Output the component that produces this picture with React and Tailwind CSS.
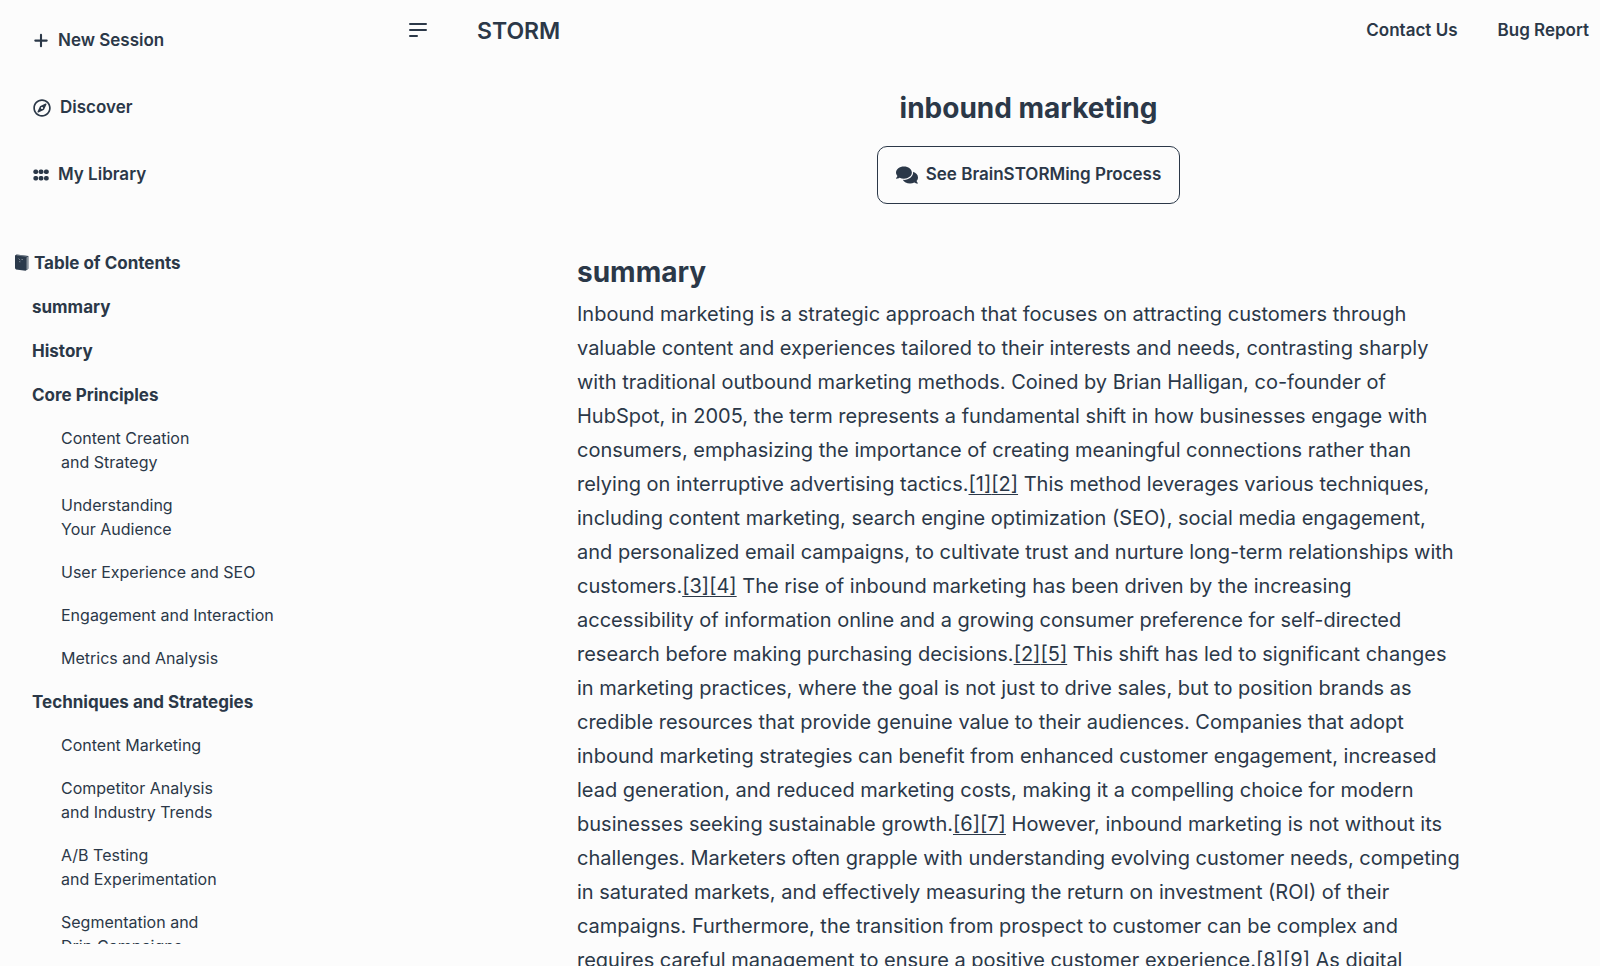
import React from "react";
import { FaComments, FaRegCompass } from "react-icons/fa";

const toc = [
  { title: "summary" },
  { title: "History" },
  {
    title: "Core Principles",
    items: [
      ["Content Creation", "and Strategy"],
      ["Understanding", "Your Audience"],
      ["User Experience and SEO"],
      ["Engagement and Interaction"],
      ["Metrics and Analysis"],
    ],
  },
  {
    title: "Techniques and Strategies",
    items: [
      ["Content Marketing"],
      ["Competitor Analysis", "and Industry Trends"],
      ["A/B Testing", "and Experimentation"],
      ["Segmentation and", "Drip Campaigns"],
    ],
  },
];

const summary = [
  "Inbound marketing is a strategic approach that focuses on attracting customers through",
  "valuable content and experiences tailored to their interests and needs, contrasting sharply",
  "with traditional outbound marketing methods. Coined by Brian Halligan, co-founder of",
  "HubSpot, in 2005, the term represents a fundamental shift in how businesses engage with",
  "consumers, emphasizing the importance of creating meaningful connections rather than",
  "relying on interruptive advertising tactics.[1][2] This method leverages various techniques,",
  "including content marketing, search engine optimization (SEO), social media engagement,",
  "and personalized email campaigns, to cultivate trust and nurture long-term relationships with",
  "customers.[3][4] The rise of inbound marketing has been driven by the increasing",
  "accessibility of information online and a growing consumer preference for self-directed",
  "research before making purchasing decisions.[2][5] This shift has led to significant changes",
  "in marketing practices, where the goal is not just to drive sales, but to position brands as",
  "credible resources that provide genuine value to their audiences. Companies that adopt",
  "inbound marketing strategies can benefit from enhanced customer engagement, increased",
  "lead generation, and reduced marketing costs, making it a compelling choice for modern",
  "businesses seeking sustainable growth.[6][7] However, inbound marketing is not without its",
  "challenges. Marketers often grapple with understanding evolving customer needs, competing",
  "in saturated markets, and effectively measuring the return on investment (ROI) of their",
  "campaigns. Furthermore, the transition from prospect to customer can be complex and",
  "requires careful management to ensure a positive customer experience.[8][9] As digital",
];

function Line({ text }) {
  return (
    <>
      {text.split(/(\[\d\])/).map((part, i) =>
        /^\[\d\]$/.test(part) ? (
          <a key={i} href={"#ref-" + part[1]} className="underline decoration-1 underline-offset-3">
            {part}
          </a>
        ) : (
          part
        )
      )}
      <br />
    </>
  );
}

function PlusIcon() {
  return (
    <svg viewBox="0 0 16 16" className="size-4" fill="none" stroke="currentColor" strokeWidth="2.1" strokeLinecap="round" aria-hidden="true">
      <path d="M8 1.9v11.4M2.3 7.6h11.4" />
    </svg>
  );
}

function GridIcon() {
  return (
    <svg viewBox="0 0 16 12" className="h-3 w-4" fill="currentColor" aria-hidden="true">
      {[0.4, 5.7, 11].map((x) =>
        [0.5, 6.9].map((y) => <rect key={x + "-" + y} x={x} y={y} width="4.7" height="4.6" rx="1.8" />)
      )}
    </svg>
  );
}

function BookIcon() {
  return (
    <svg viewBox="0 0 16 18" className="h-[18px] w-4" aria-hidden="true">
      <path d="M1 1.4 2.6.6 14.4 2v12.8l-2.8 2L2 15.4 1 14.2Z" fill="#2b3a4b" />
      <path d="M12.6 3.4v12.4l1.2-.9V2.6Z" fill="#a3abb3" />
      <path d="M2.6 1 12.6 2.3" stroke="#8b959f" strokeWidth=".7" />
      <path d="M4.6 4.6l1.6 1.6M7.4 5.4l1.6.2M5 7.6l1.4.2" stroke="#8b959f" strokeWidth=".8" />
    </svg>
  );
}

export default function App() {
  return (
    <div className="flex h-screen overflow-hidden bg-[#fcfcfc] font-[Inter,'Liberation_Sans',sans-serif] text-[#2b3848]">
      <aside className="flex h-full w-[457px] shrink-0 items-start justify-between pb-[22px]">
        <div className="flex h-full min-w-0 flex-col">
          <nav aria-label="Main" className="flex flex-col items-start gap-[19px] pt-[17px] pl-[33px] text-[17px] font-semibold">
            <a href="#new" className="flex h-12 items-center gap-[9px]">
              <PlusIcon />
              New Session
            </a>
            <a href="#discover" className="flex h-12 items-center gap-[9px]">
              <FaRegCompass className="size-[18px]" aria-hidden="true" />
              Discover
            </a>
            <a href="#library" className="flex h-12 items-center gap-[9px]">
              <GridIcon />
              My Library
            </a>
          </nav>
          <nav aria-label="Table of Contents" className="mt-[52px] min-h-0 flex-1 overflow-hidden pl-[14px] leading-6">
            <h2 className="flex items-center gap-1 text-[17px] leading-6 font-bold">
              <BookIcon />
              Table of Contents
            </h2>
            <ul className="pl-[18px]">
              {toc.map((section) => (
                <li key={section.title}>
                  <a href="#section" className="mt-5 block text-[17px] leading-6 font-bold">
                    {section.title}
                  </a>
                  {section.items && (
                    <ul className="pl-[29px]">
                      {section.items.map((lines) => (
                        <li key={lines[0]} className="mt-[19px]">
                          <a href="#subsection" className="block text-[16px] leading-6">
                            {lines[0]}
                            {lines[1] && <br />}
                            {lines[1]}
                          </a>
                        </li>
                      ))}
                    </ul>
                  )}
                </li>
              ))}
            </ul>
          </nav>
        </div>
        <button type="button" aria-label="Toggle sidebar" className="mt-[18px] mr-[27px]">
          <svg viewBox="0 0 24 24" className="size-6" fill="none" stroke="currentColor" strokeWidth="2" strokeLinecap="round" aria-hidden="true">
            <path d="M4 6h16M4 12h16M4 18h7" />
          </svg>
        </button>
      </aside>

      <div className="min-w-0 flex-1">
        <header className="flex h-[62px] items-center justify-between pr-[11px] pl-5">
          <span className="text-[23px] font-semibold">STORM</span>
          <nav aria-label="Support" className="flex gap-10 text-[17px] font-semibold">
            <a href="#contact">Contact Us</a>
            <a href="#bug">Bug Report</a>
          </nav>
        </header>
        <main className="px-[120px]">
          <div className="flex flex-col items-center pt-[26px]">
            <h1 className="text-[28px] leading-10 font-bold">inbound marketing</h1>
            <button type="button" className="mt-[18px] flex h-[58px] items-center gap-2 rounded-[10px] border border-current px-[18px] text-[17px] font-semibold">
              <FaComments className="size-[22px]" aria-hidden="true" />
              See BrainSTORMing Process
            </button>
          </div>
          <section className="mt-12">
            <h2 className="text-[28px] leading-10 font-bold">summary</h2>
            <p className="mt-[5px] text-[20px] leading-[34px] whitespace-nowrap">
              {summary.map((text) => (
                <Line key={text} text={text} />
              ))}
            </p>
          </section>
        </main>
      </div>
    </div>
  );
}
